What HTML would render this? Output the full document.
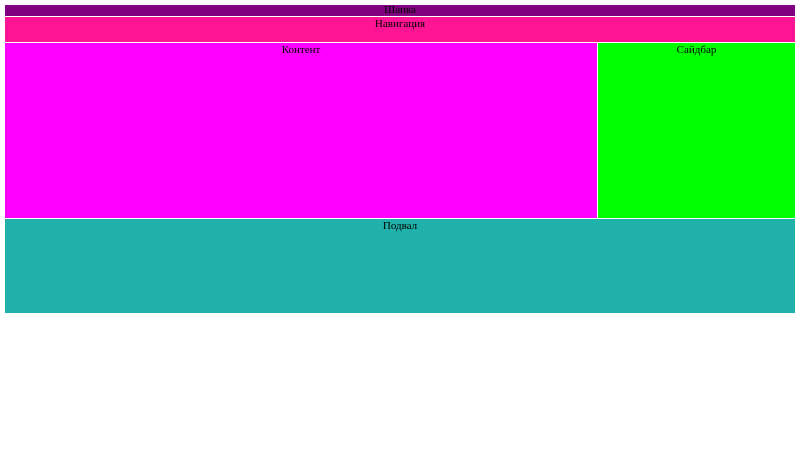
<!DOCTYPE html>
<html><head><style>
body{margin:0;background:#fff;font-family:"Liberation Serif",serif;font-size:11px;color:#000}
div{position:absolute;text-align:center;line-height:15px;overflow:visible}
</style></head><body>
<div style="left:5px;top:5px;width:790px;height:11px;background:#800080;line-height:11px">Шапка</div>
<div style="left:5px;top:17px;width:790px;height:25px;background:#ff1493">Навигация</div>
<div style="left:5px;top:43px;width:592px;height:175px;background:#ff00ff">Контент</div>
<div style="left:598px;top:43px;width:197px;height:175px;background:#00ff00">Сайдбар</div>
<div style="left:5px;top:219px;width:790px;height:94px;background:#20b2aa">Подвал</div>
</body></html>
